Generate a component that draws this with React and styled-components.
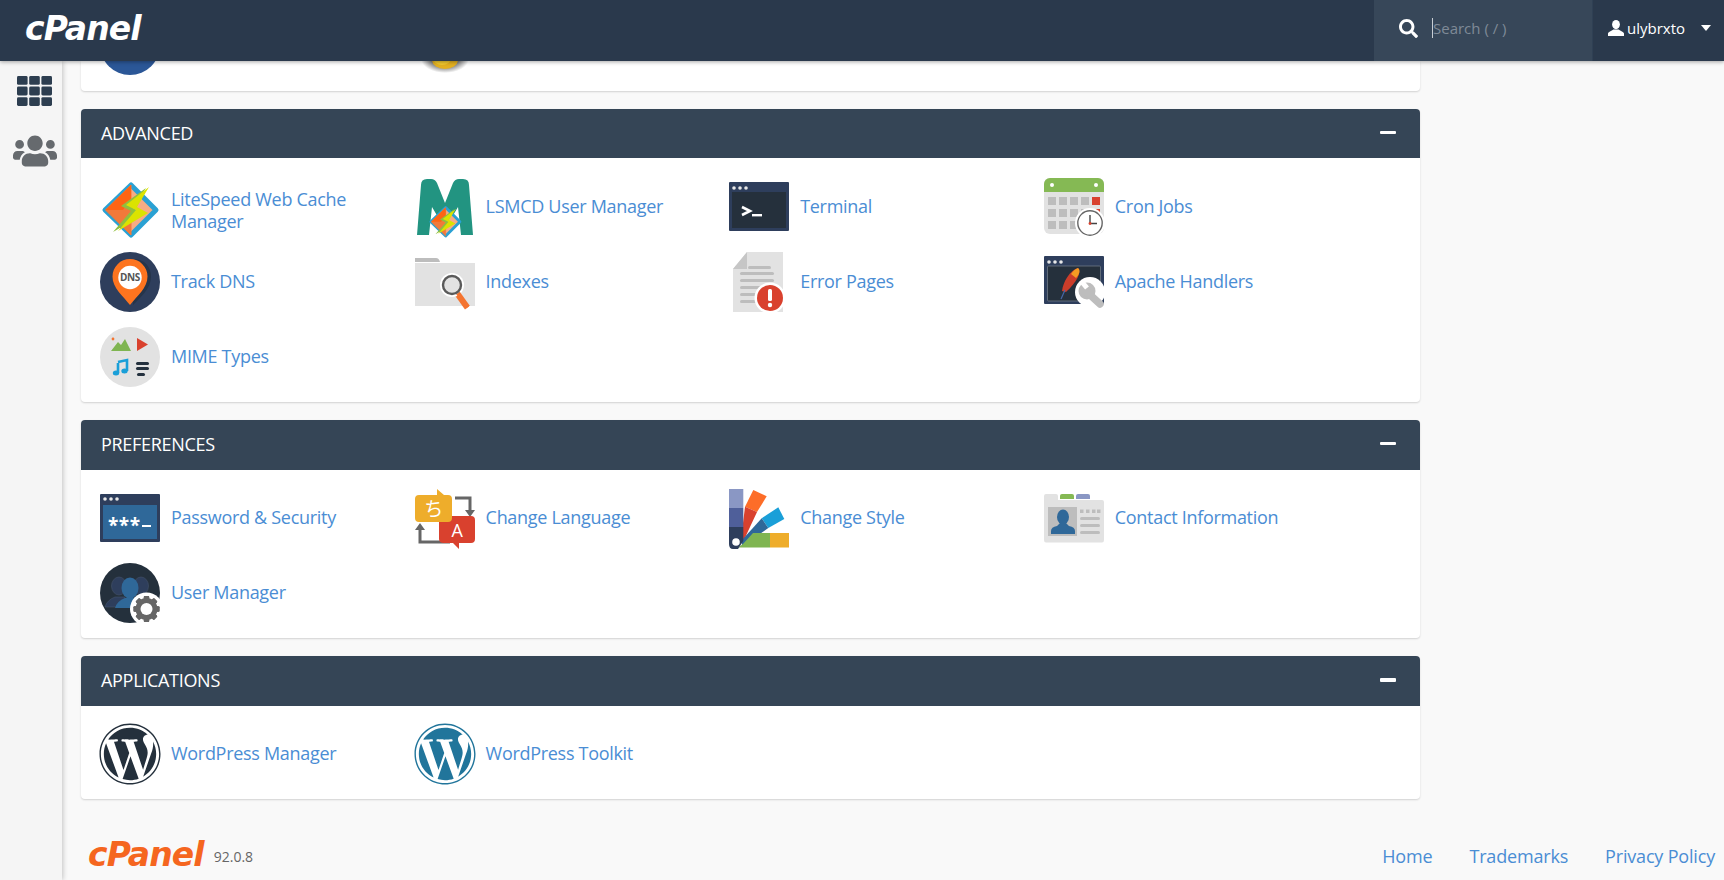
import React from 'react';
import styled, { createGlobalStyle } from 'styled-components';
import { FaSearch, FaUsers, FaWordpress } from 'react-icons/fa';

const Global = createGlobalStyle`
  html, body { margin: 0; padding: 0; height: 880px; overflow: hidden; background: #f9f9f9; }
  body { font-family: "Open Sans", "Liberation Sans", sans-serif; }
  * { box-sizing: border-box; }
`;

const Page = styled.div`
  display: grid;
  grid-template-rows: 60.5px 1fr;
  grid-template-columns: 62px 1fr;
  height: 880px;
  overflow: hidden;
`;
const TopBar = styled.header`
  grid-column: 1 / 3;
  position: relative;
  z-index: 3;
  display: flex;
  align-items: stretch;
  background: #2a394c;
  box-shadow: 0 1px 4px rgba(0, 0, 0, 0.35);
`;
const Brand = styled.div`
  flex: 1;
  display: flex;
  align-items: center;
  padding: 0 0 3px 25px;
`;
const Logo = styled.span`
  font-family: "DejaVu Sans", sans-serif;
  font-style: italic;
  font-weight: 700;
  font-size: ${p => p.$size}px;
  letter-spacing: -0.9px;
  line-height: 1;
  color: ${p => p.$color};
`;
const SearchBox = styled.div`
  width: 219px;
  display: flex;
  align-items: center;
  gap: 14px;
  padding: 0 0 4px 25px;
  background: #374759;
  border-right: 1px solid #2f4054;
  color: #fff;
  font-size: 19px;
`;
const SearchHint = styled.span`
  border-left: 1px solid #c8ced4;
  font-size: 15px;
  line-height: 20px;
  color: #7f8a97;
`;
const UserMenu = styled.div`
  width: 131px;
  display: flex;
  align-items: center;
  padding: 0 0 4px 15px;
  color: #fff;
  font-size: 15px;
  font-weight: 500;
`;
const UserName = styled.span`
  margin-left: 3px;
`;
const Caret = styled.span`
  margin-left: 16px;
  width: 0;
  height: 0;
  border-left: 5.5px solid transparent;
  border-right: 5.5px solid transparent;
  border-top: 6px solid #fff;
`;
const Rail = styled.nav`
  position: relative;
  z-index: 2;
  display: flex;
  flex-direction: column;
  align-items: center;
  padding: 15px 0 0 7px;
  gap: 30px;
  background: #f5f5f5;
  box-shadow: 1px 0 5px rgba(0, 0, 0, 0.22);
`;
const RailUsers = styled.div`
  height: 31px;
  display: flex;
  align-items: center;
  color: #666a6e;
  font-size: 44px;
`;
const Main = styled.main`
  padding-left: 19px;
  overflow: hidden;
`;
const Panel = styled.section`
  width: 1339px;
  margin-top: ${p => (p.$first ? 0 : '18.1px')};
  background: #fff;
  border-radius: ${p => (p.$first ? '0 0 4px 4px' : '4px')};
  box-shadow: 0 1px 2px rgba(0, 0, 0, 0.16);
  overflow: hidden;
`;
const PanelHead = styled.div`
  height: 49.6px;
  display: flex;
  align-items: center;
  justify-content: space-between;
  padding: 0 24px 2px 20px;
  background: #354556;
  color: #fff;
  font-size: 18px;
  letter-spacing: -0.3px;
`;
const Minus = styled.span`
  width: 16px;
  height: 3.4px;
  background: #fff;
  border-radius: 1px;
`;
const Grid = styled.div`
  display: grid;
  grid-template-columns: repeat(4, 314.6px);
  padding: 18.5px 0 0 19px;
`;
const Item = styled.a`
  height: 60px;
  margin-bottom: 15px;
  display: flex;
  align-items: center;
  gap: 11px;
  padding-right: 40px;
  color: #4a8dd4;
  font-size: 18px;
  line-height: 22px;
  letter-spacing: -0.3px;
`;
const ItemLabel = styled.span`
  padding: ${p => (p.$two ? '7px 0 0' : '0 0 2px')};
`;
const IconBox = styled.span`
  flex: none;
  width: 60px;
  height: 60px;
  display: flex;
  font-size: 60px;
  color: ${p => p.$color || 'inherit'};
  svg { display: block; width: 60px; height: 60px; overflow: visible; transform: scale(${p => p.$scale || 1}); }
`;
const Sliver = styled.div`
  height: 30.2px;
  display: grid;
  grid-template-columns: repeat(4, 314.6px);
  padding-left: 19px;
  overflow: hidden;
`;
const SliverIcon = styled.div`
  width: 60px;
  height: 60px;
  margin-top: -46px;
  svg { display: block; width: 60px; height: 60px; }
`;
const Footer = styled.footer`
  display: flex;
  align-items: center;
  justify-content: space-between;
  margin: 40px 0 0 -19px;
  padding: 0 9px 0 26px;
  height: 30px;
`;
const FootBrand = styled.div`
  display: flex;
  align-items: center;
  gap: 10px;
`;
const Version = styled.span`
  font-size: 14px;
  color: #666;
  padding-top: 5px;
`;
const FootLinks = styled.div`
  display: flex;
  gap: 37px;
  padding-top: 3px;
`;
const FootLink = styled.a`
  font-size: 18px;
  color: #4a8dd4;
  letter-spacing: -0.18px;
`;

const Navy = '#2e3e5c', Dark = '#25303c', Gray = '#e2e2e2', Mid = '#bdbdbd', Blue = '#2f6899', Red = '#d9412e';

const Diamond = () => (
  <>
    <path d="M31 8 L56 33 L31 58 L5 33 Z" fill="#f6ab84" stroke="#2aa1d3" strokeWidth="5" strokeLinejoin="round" />
    <path d="M31 8 L5.5 33 L31 58 Z" fill="#f2793a" stroke="#f2793a" strokeWidth="1" />
    <path d="M31 8 L5.5 33 L23 33 L31 22 Z" fill="#fd6414" />
    <path d="M46 11 L21 29 L31 34 L13 55 L44 37 L33 31 Z" fill="#8fbf3f" />
    <path d="M49 10 L26 28 L36 33 L18 54 L48 36 L37 30 Z" fill="#dbe300" />
  </>
);
const WinDots = () => (
  <g fill="#e8e8e8">
    <circle cx="5" cy="11" r="1.8" /><circle cx="11" cy="11" r="1.8" /><circle cx="17" cy="11" r="1.8" />
  </g>
);

const Litespeed = () => <svg viewBox="0 0 60 60"><Diamond /></svg>;
const Lsmcd = () => (
  <svg viewBox="0 0 60 60">
    <path d="M2 58 L6 8 Q6 2 12 2 H16 Q20 2 22 6 L30 26 L38 6 Q40 2 44 2 H48 Q54 2 54 8 L58 58 H46 L43 30 L30 52 L17 30 L14 58 Z" fill="#229481" />
    <g transform="translate(13 26) scale(.57)"><Diamond /></g>
  </svg>
);
const Terminal = () => (
  <svg viewBox="0 0 60 60">
    <rect y="5" width="60" height="49" rx="1" fill={Navy} />
    <rect x="3" y="15" width="54" height="36" fill={Dark} />
    <WinDots />
    <path d="M13 30 L21 34 L13 38" fill="none" stroke="#fff" strokeWidth="2.6" />
    <rect x="23" y="37" width="10" height="2.4" fill="#fff" />
  </svg>
);
const Cron = () => (
  <svg viewBox="0 0 60 60">
    <rect y="1" width="60" height="56" rx="6" fill={Gray} />
    <path d="M0 15 V7 a6 6 0 0 1 6-6 H54 a6 6 0 0 1 6 6 V15 Z" fill="#85b954" />
    <circle cx="8" cy="8" r="2" fill="#fff" /><circle cx="52" cy="8" r="2" fill="#fff" />
    {[20, 32, 44].map(y => [4, 15, 26, 37, 48].map(x => (
      <rect key={`${x}-${y}`} x={x} y={y} width="8" height="8" fill={x === 48 && y < 40 ? Red : Mid} />
    )))}
    <circle cx="46" cy="46" r="15" fill="#fff" />
    <circle cx="46" cy="46" r="12.2" fill="#fff" stroke="#666" strokeWidth="1.4" />
    <path d="M46 38 V46.5 H53" fill="none" stroke="#444" strokeWidth="1.4" />
    <circle cx="46" cy="46.5" r="1.4" fill={Red} />
  </svg>
);
const TrackDns = () => (
  <svg viewBox="0 0 60 60">
    <circle cx="30" cy="30" r="30" fill={Navy} />
    <path d="M33 7 C45 7 51 15 51 25 C51 36 41 45 33 53 Z" fill="#26354a" />
    <path d="M30 53 C23 44 12.5 36 12.5 24.5 A17.5 17.5 0 0 1 47.5 24.5 C47.5 36 37 44 30 53 Z" fill="#fd741f" />
    <circle cx="30" cy="25.5" r="11.7" fill="#fff" />
    <text x="30" y="29" textAnchor="middle" fontFamily="Open Sans" fontWeight="700" fontSize="10" fill="#555">DNS</text>
  </svg>
);
const Indexes = () => (
  <svg viewBox="0 0 60 60">
    <path d="M0 6 H21 Q24 6 25 10 H0 Z" fill={Mid} />
    <path d="M0 11 H60 V54 H0 Z" fill={Gray} />
    <path d="M42 42 L52 56" stroke="#f47430" strokeWidth="5" />
    <circle cx="37" cy="33" r="12" fill="#fff" />
    <path d="M43 41 L53 55" stroke="#f47430" strokeWidth="4.4" />
    <circle cx="37" cy="33" r="9" fill={Gray} stroke="#5a5a5a" strokeWidth="2.4" />
  </svg>
);
const ErrorPages = () => (
  <svg viewBox="0 0 60 60">
    <path d="M18 0 H54 V60 H4 V17 Z" fill={Gray} />
    <path d="M18 0 V17 H4 Z" fill="#c6c6c6" />
    <g fill={Mid}>
      <rect x="19" y="14" width="23" height="3" rx="1.5" />
      <rect x="11" y="20" width="34" height="3" rx="1.5" />
      <rect x="11" y="27" width="34" height="3" rx="1.5" />
      <rect x="11" y="34" width="22" height="3" rx="1.5" />
      <rect x="11" y="41" width="16" height="3" rx="1.5" />
      <rect x="11" y="48" width="16" height="3" rx="1.5" />
    </g>
    <circle cx="41" cy="46" r="15.5" fill="#fff" />
    <circle cx="41" cy="46" r="13" fill={Red} />
    <rect x="39" y="37" width="4" height="12" rx="1.5" fill="#fff" />
    <circle cx="41" cy="53" r="2.2" fill="#fff" />
  </svg>
);
const Apache = () => (
  <svg viewBox="0 0 60 60">
    <rect y="4" width="60" height="48" rx="1" fill={Navy} />
    <rect x="3.5" y="14" width="53" height="35" rx="1" fill={Dark} stroke="#6e7885" strokeWidth=".8" />
    <g transform="translate(0 -1)"><WinDots /></g>
    <path d="M34 16 C38 20 33 30 22 40 L18 39 C19 30 26 18 34 16 Z" fill="#cc3d2a" />
    <path d="M34 16 C37 18 35 23 32 26 L27 22 C29 19 31 17 34 16 Z" fill="#f59b23" />
    <path d="M21 38 L17 47" stroke="#4468a8" strokeWidth="1.2" />
    <circle cx="46" cy="40" r="15" fill="#fff" />
    <circle cx="43" cy="39" r="8.5" fill={Mid} />
    <path d="M44 41 L56 52" stroke={Mid} strokeWidth="7.5" strokeLinecap="round" />
    <path d="M38 30 L43 36" stroke="#fff" strokeWidth="5" />
  </svg>
);
const Mime = () => (
  <svg viewBox="0 0 60 60">
    <circle cx="30" cy="30" r="30" fill={Gray} />
    <circle cx="13" cy="12" r="1.4" fill="#f47430" />
    <path d="M11 24 L18 15 L21 18 L25 12 L31 24 Z" fill="#7fb551" />
    <path d="M37 11 L48 17.5 L37 24 Z" fill={Red} />
    <path d="M18 35 L27 33 V44" fill="none" stroke="#1a9fd8" strokeWidth="2.6" />
    <ellipse cx="16" cy="46" rx="3.2" ry="2.5" fill="#1a9fd8" />
    <ellipse cx="24.5" cy="44" rx="3.2" ry="2.5" fill="#1a9fd8" />
    <path d="M18 36 V46" stroke="#1a9fd8" strokeWidth="2.6" />
    <g fill="#24313e">
      <rect x="36" y="35" width="13" height="3" rx="1.5" />
      <rect x="36" y="40" width="13" height="3" rx="1.5" />
      <rect x="37" y="46" width="8" height="3" rx="1.5" />
    </g>
  </svg>
);
const Password = () => (
  <svg viewBox="0 0 60 60">
    <rect y="6" width="60" height="48" rx="1" fill={Navy} />
    <rect x="3" y="17" width="54" height="34" fill={Blue} />
    <WinDots />
    <text x="8" y="44" fontFamily="Open Sans" fontWeight="700" fontSize="19" letterSpacing=".5" fill="#fff">***</text>
    <rect x="42" y="37" width="9" height="2" fill="#fff" />
  </svg>
);
const Language = () => (
  <svg viewBox="0 0 60 60">
    <path d="M40 10 H55 V22" fill="none" stroke="#666" strokeWidth="3" />
    <path d="M50 22 H60 L55 29 Z" fill="#666" />
    <path d="M35 54 H5 V42" fill="none" stroke="#666" strokeWidth="3" />
    <path d="M0 42 H10 L5 35 Z" fill="#666" />
    <path d="M29 28 H56 Q60 28 60 32 V51 Q60 55 56 55 H44 L44 61 L38 55 H29 Q24 55 24 51 V32 Q24 28 29 28 Z" fill={Red} />
    <path d="M4 7 H22 V1 L29 7 H33 Q37 7 37 11 V30 Q37 34 33 34 H4 Q0 34 0 30 V11 Q0 7 4 7 Z" fill="#eead2b" />
    <text x="18.5" y="28" textAnchor="middle" fontFamily="Noto Sans CJK JP" fontSize="19" fill="#fff">ち</text>
    <text x="42" y="49" textAnchor="middle" fontFamily="Open Sans" fontSize="18" fill="#fff">A</text>
  </svg>
);
const Style = () => (
  <svg viewBox="0 0 60 60">
    <path d="M24.3 2 L37.7 8.3 L28 24 L16 18.7 Z" fill="#fd6d28" />
    <path d="M16 18.7 L28 24 L14 54 V35 Z" fill={Red} />
    <path d="M49.3 19.3 L55.3 31 L39.3 40 L32.7 30.3 Z" fill="#1a9fd8" />
    <path d="M32.7 30.3 L39.3 40 L13 59 V52 Z" fill={Blue} />
    <path d="M41 45 V59.5 H9 L14 56 L24 45 Z" fill="#7fb551" />
    <rect x="41" y="45" width="19" height="14.5" fill="#eead2b" />
    <rect y="1" width="14.3" height="19" fill="#8a97c4" />
    <rect y="20" width="14.3" height="19" fill="#4f5f9a" />
    <path d="M0 39 H14.3 V53 L9 61 H4 Q0 61 0 56 Z" fill={Navy} />
    <circle cx="7" cy="54" r="3.8" fill="#fff" />
  </svg>
);
const Contact = () => (
  <svg viewBox="0 0 60 60">
    <path d="M16 11 V8 Q16 6 18 6 H28 Q30 6 30 8 V11 Z" fill="#85b954" />
    <path d="M32 11 V8 Q32 6 34 6 H44 Q46 6 46 8 V11 Z" fill="#8a97c4" />
    <path d="M2 6 H12 Q14 6 14 8 V12 H58 Q60 12 60 14 V52 Q60 54.5 58 54.5 H2 Q0 54.5 0 52 V8 Q0 6 2 6 Z" fill={Gray} />
    <rect x="4" y="19" width="29" height="29" fill={Mid} />
    <ellipse cx="19" cy="29" rx="6" ry="7.5" fill={Blue} />
    <path d="M7 46 V43 Q7 39 13 38 L16 35 H22 L25 38 Q31 39 31 43 V46 Z" fill={Blue} />
    <g fill={Mid}>
      {[36, 42, 48, 53].map(x => <rect key={x} x={x} y="21.5" width="3.5" height="3.5" />)}
      <rect x="36" y="29" width="20" height="3" rx="1.5" />
      <rect x="36" y="36" width="20" height="3" rx="1.5" />
      <rect x="36" y="43" width="20" height="3" rx="1.5" />
    </g>
  </svg>
);
const UserMgr = () => (
  <svg viewBox="0 0 60 60">
    <circle cx="30" cy="30" r="30" fill="#24303c" />
    <g fill={Navy} stroke="#4a5870" strokeWidth=".5">
      <ellipse cx="19" cy="23" rx="7.5" ry="9" />
      <path d="M5 44 Q7 37 15 34 L25 34 L25 44 Z" />
      <ellipse cx="41" cy="23" rx="7.5" ry="9" />
      <path d="M55 44 Q53 37 45 34 L35 34 L35 44 Z" />
    </g>
    <ellipse cx="30" cy="25" rx="8.5" ry="10.5" fill={Blue} />
    <path d="M15 45 Q17 38 25 35 L35 35 Q43 38 45 45 Z" fill={Blue} />
    <circle cx="46.5" cy="46" r="16.5" fill="#fff" />
    <g fill="#666">
      {[0, 45, 90, 135, 180, 225, 270, 315].map(a => (
        <rect key={a} x="43.8" y="33" width="5.4" height="26" rx="1" transform={`rotate(${a} 46.5 46)`} />
      ))}
    </g>
    <circle cx="46.5" cy="46" r="9" fill="none" stroke="#666" strokeWidth="4" />
    <circle cx="46.5" cy="46" r="6" fill="#fff" />
  </svg>
);
const AppsGrid = () => (
  <svg width="35" height="30" viewBox="0 0 35 30" fill="#2d3e50">
    {[0, 12.2, 24.4].map(x => [0, 10.6, 21.2].map(y => (
      <rect key={`${x}-${y}`} x={x} y={y} width="10.6" height="8.8" rx="1.4" />
    )))}
  </svg>
);
const UserGlyph = () => (
  <svg width="16" height="16" viewBox="0 0 16 16" fill="#fff">
    <ellipse cx="8" cy="4.6" rx="3.9" ry="4.6" />
    <path d="M0 16 V13.6 C0 11.6 3.6 11 5.4 9.4 H10.6 C12.4 11 16 11.6 16 13.6 V16 Z" />
  </svg>
);
const BlueDisc = () => <svg viewBox="0 0 60 60"><circle cx="30" cy="30" r="30" fill="#2b5797" /></svg>;
const Coin = () => (
  <svg viewBox="0 0 60 60">
    <defs>
      <radialGradient id="coinHalo">
        <stop offset="55%" stopColor="#7a7a7a" />
        <stop offset="100%" stopColor="#7a7a7a" stopOpacity="0" />
      </radialGradient>
    </defs>
    <ellipse cx="30" cy="44" rx="24" ry="14" fill="url(#coinHalo)" />
    <ellipse cx="30" cy="45" rx="13" ry="9" fill="#e3b020" />
    <ellipse cx="27" cy="43" rx="9" ry="7" fill="#f2c92f" />
    <circle cx="40" cy="42" r="2.5" fill="#f4efd8" />
  </svg>
);

const Entry = ({ icon, color, scale, two, children }) => (
  <Item>
    <IconBox $color={color} $scale={scale}>{icon}</IconBox>
    <ItemLabel $two={two}>{children}</ItemLabel>
  </Item>
);

export default function App() {
  return (
    <>
      <Global />
      <Page>
        <TopBar>
          <Brand><Logo $size={33} $color="#fff">cPanel</Logo></Brand>
          <SearchBox>
            <FaSearch />
            <SearchHint>Search ( / )</SearchHint>
          </SearchBox>
          <UserMenu>
            <UserGlyph />
            <UserName>ulybrxto</UserName>
            <Caret />
          </UserMenu>
        </TopBar>
        <Rail>
          <AppsGrid />
          <RailUsers><FaUsers /></RailUsers>
        </Rail>
        <Main>
          <Panel $first>
            <Sliver>
              <SliverIcon><BlueDisc /></SliverIcon>
              <SliverIcon><Coin /></SliverIcon>
            </Sliver>
          </Panel>
          <Panel>
            <PanelHead>ADVANCED<Minus /></PanelHead>
            <Grid>
              <Entry icon={<Litespeed />} two>LiteSpeed Web Cache Manager</Entry>
              <Entry icon={<Lsmcd />}>LSMCD User Manager</Entry>
              <Entry icon={<Terminal />}>Terminal</Entry>
              <Entry icon={<Cron />}>Cron Jobs</Entry>
              <Entry icon={<TrackDns />}>Track DNS</Entry>
              <Entry icon={<Indexes />}>Indexes</Entry>
              <Entry icon={<ErrorPages />}>Error Pages</Entry>
              <Entry icon={<Apache />}>Apache Handlers</Entry>
              <Entry icon={<Mime />}>MIME Types</Entry>
            </Grid>
          </Panel>
          <Panel>
            <PanelHead>PREFERENCES<Minus /></PanelHead>
            <Grid>
              <Entry icon={<Password />}>Password &amp; Security</Entry>
              <Entry icon={<Language />}>Change Language</Entry>
              <Entry icon={<Style />}>Change Style</Entry>
              <Entry icon={<Contact />}>Contact Information</Entry>
              <Entry icon={<UserMgr />}>User Manager</Entry>
            </Grid>
          </Panel>
          <Panel>
            <PanelHead>APPLICATIONS<Minus /></PanelHead>
            <Grid>
              <Entry icon={<FaWordpress />} scale={1.05} color="#24303c">WordPress Manager</Entry>
              <Entry icon={<FaWordpress />} scale={1.05} color="#21759b">WordPress Toolkit</Entry>
            </Grid>
          </Panel>
          <Footer>
            <FootBrand>
              <Logo $size={33} $color="#f5661f">cPanel</Logo>
              <Version>92.0.8</Version>
            </FootBrand>
            <FootLinks>
              <FootLink>Home</FootLink>
              <FootLink>Trademarks</FootLink>
              <FootLink>Privacy Policy</FootLink>
            </FootLinks>
          </Footer>
        </Main>
      </Page>
    </>
  );
}
